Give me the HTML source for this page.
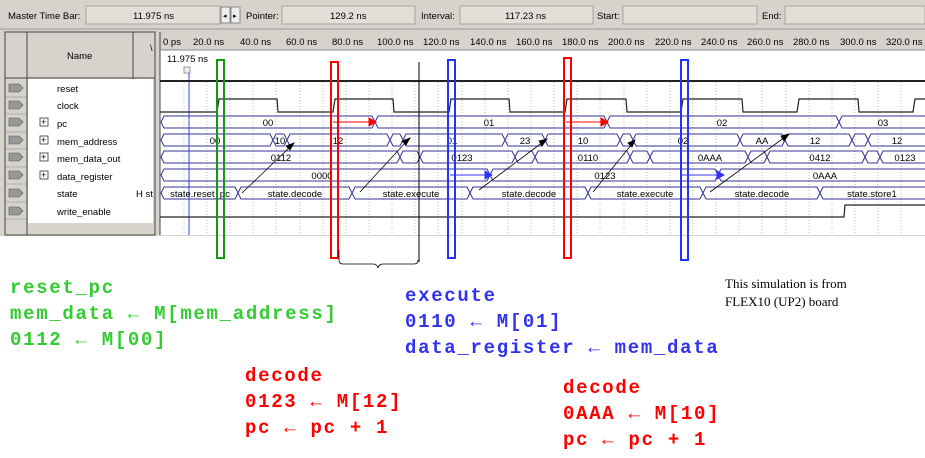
<!DOCTYPE html>
<html><head><meta charset="utf-8"><style>
body{margin:0;width:925px;height:458px;background:#fff;overflow:hidden;position:relative;font-family:"Liberation Sans",sans-serif}
.m{position:absolute;font-family:"Liberation Mono",monospace;font-weight:bold;font-size:19px;letter-spacing:1.7px;white-space:pre;line-height:26px}
</style></head><body>
<svg width="925" height="458" style="position:absolute;left:0;top:0" font-family="Liberation Sans, sans-serif">
<rect x="0" y="0" width="925" height="236" fill="#d6d3cc"/>
<!-- toolbar -->
<g font-size="9.5" fill="#000">
<text x="8" y="19">Master Time Bar:</text>
<rect x="86" y="6" width="134" height="18" fill="#e2dfd8" stroke="#a8a49c"/>
<text x="133" y="19">11.975 ns</text>
<rect x="221" y="7" width="9" height="16" fill="#eee" stroke="#888"/><rect x="231" y="7" width="9" height="16" fill="#eee" stroke="#888"/>
<text x="223" y="18" font-size="7">◂</text><text x="233" y="18" font-size="7">▸</text>
<text x="246" y="19">Pointer:</text>
<rect x="282" y="6" width="133" height="18" fill="#e2dfd8" stroke="#a8a49c"/>
<text x="330" y="19">129.2 ns</text>
<text x="421" y="19">Interval:</text>
<rect x="460" y="6" width="133" height="18" fill="#e2dfd8" stroke="#a8a49c"/>
<text x="505" y="19">117.23 ns</text>
<text x="597" y="19">Start:</text>
<rect x="623" y="6" width="134" height="18" fill="#e2dfd8" stroke="#a8a49c"/>
<text x="762" y="19">End:</text>
<rect x="785" y="6" width="140" height="18" fill="#e2dfd8" stroke="#a8a49c"/>
</g>
<line x1="0" y1="29" x2="925" y2="29" stroke="#999"/>
<!-- left panel -->
<rect x="5" y="32" width="150" height="203" fill="#d6d3cc" stroke="#444"/>
<rect x="28" y="79" width="105" height="144" fill="#fff"/>
<rect x="133" y="79" width="20" height="144" fill="#fff"/>
<line x1="27" y1="32" x2="27" y2="235" stroke="#444"/>
<line x1="133" y1="32" x2="133" y2="79" stroke="#444"/>
<line x1="5" y1="78" x2="155" y2="78" stroke="#444"/>
<text x="67" y="59" font-size="9.5">Name</text>
<text x="150" y="51" font-size="9">\</text>
<g font-size="9.5">
<text x="57" y="92">reset</text><text x="57" y="109">clock</text><text x="57" y="127">pc</text>
<text x="57" y="145">mem_address</text><text x="57" y="162">mem_data_out</text><text x="57" y="180">data_register</text>
<text x="57" y="197">state</text><text x="57" y="215">write_enable</text>
<text x="136" y="197">H st</text>
</g>
<g fill="#fff" stroke="#333" stroke-width="0.8">
<rect x="40" y="118" width="8" height="8"/><rect x="40" y="136" width="8" height="8"/><rect x="40" y="153" width="8" height="8"/><rect x="40" y="171" width="8" height="8"/>
</g>
<g font-size="9" fill="#000"><text x="41" y="125">+</text><text x="41" y="143">+</text><text x="41" y="160">+</text><text x="41" y="178">+</text></g>
<g fill="#999" stroke="#555" stroke-width="0.6">
<path d="M9 84h10l4 4-4 4H9z"/><path d="M9 101h10l4 4-4 4H9z"/><path d="M9 118h10l4 4-4 4H9z"/><path d="M9 136h10l4 4-4 4H9z"/><path d="M9 153h10l4 4-4 4H9z"/><path d="M9 171h10l4 4-4 4H9z"/><path d="M9 189h10l4 4-4 4H9z"/><path d="M9 207h10l4 4-4 4H9z"/>
</g>
<g stroke="#888" stroke-width="0.5"><line x1="5" y1="97" x2="27" y2="97"/><line x1="5" y1="114" x2="27" y2="114"/><line x1="5" y1="132" x2="27" y2="132"/><line x1="5" y1="149" x2="27" y2="149"/><line x1="5" y1="167" x2="27" y2="167"/><line x1="5" y1="184" x2="27" y2="184"/><line x1="5" y1="202" x2="27" y2="202"/><line x1="5" y1="219" x2="27" y2="219"/></g>
<!-- wave area -->
<rect x="160" y="32" width="765" height="203" fill="#fff"/>
<rect x="160" y="32" width="765" height="18" fill="#d6d3cc"/>
<line x1="160" y1="32" x2="160" y2="235" stroke="#444"/>
<line x1="160" y1="50" x2="925" y2="50" stroke="#888"/>
<g font-size="9.5">
<text x="163" y="45">0 ps</text><text x="193" y="45">20.0 ns</text><text x="240" y="45">40.0 ns</text><text x="286" y="45">60.0 ns</text><text x="332" y="45">80.0 ns</text><text x="377" y="45">100.0 ns</text><text x="423" y="45">120.0 ns</text><text x="470" y="45">140.0 ns</text><text x="516" y="45">160.0 ns</text><text x="562" y="45">180.0 ns</text><text x="608" y="45">200.0 ns</text><text x="655" y="45">220.0 ns</text><text x="701" y="45">240.0 ns</text><text x="747" y="45">260.0 ns</text><text x="793" y="45">280.0 ns</text><text x="840" y="45">300.0 ns</text><text x="886" y="45">320.0 ns</text>
<text x="167" y="62">11.975 ns</text>
</g>
<rect x="184" y="67" width="6" height="6" fill="#eee" stroke="#999"/>
<g stroke="#bbb" stroke-dasharray="1,2">
<line x1="184" y1="82" x2="184" y2="235"/><line x1="207" y1="82" x2="207" y2="235"/><line x1="230" y1="82" x2="230" y2="235"/><line x1="253" y1="82" x2="253" y2="235"/><line x1="276" y1="82" x2="276" y2="235"/><line x1="300" y1="82" x2="300" y2="235"/><line x1="323" y1="82" x2="323" y2="235"/><line x1="346" y1="82" x2="346" y2="235"/><line x1="369" y1="82" x2="369" y2="235"/><line x1="392" y1="82" x2="392" y2="235"/><line x1="415" y1="82" x2="415" y2="235"/><line x1="438" y1="82" x2="438" y2="235"/><line x1="462" y1="82" x2="462" y2="235"/><line x1="485" y1="82" x2="485" y2="235"/><line x1="508" y1="82" x2="508" y2="235"/><line x1="531" y1="82" x2="531" y2="235"/><line x1="554" y1="82" x2="554" y2="235"/><line x1="577" y1="82" x2="577" y2="235"/><line x1="600" y1="82" x2="600" y2="235"/><line x1="624" y1="82" x2="624" y2="235"/><line x1="647" y1="82" x2="647" y2="235"/><line x1="670" y1="82" x2="670" y2="235"/><line x1="693" y1="82" x2="693" y2="235"/><line x1="716" y1="82" x2="716" y2="235"/><line x1="739" y1="82" x2="739" y2="235"/><line x1="762" y1="82" x2="762" y2="235"/><line x1="786" y1="82" x2="786" y2="235"/><line x1="809" y1="82" x2="809" y2="235"/><line x1="832" y1="82" x2="832" y2="235"/><line x1="855" y1="82" x2="855" y2="235"/><line x1="878" y1="82" x2="878" y2="235"/><line x1="901" y1="82" x2="901" y2="235"/>
</g>
<line x1="189" y1="73" x2="189" y2="235" stroke="#3344ee"/>
<line x1="160" y1="81" x2="925" y2="81" stroke="#222" stroke-width="2"/>
<!-- clock -->
<polyline fill="none" stroke="#222" stroke-width="1.2" points="160,112 217,112 219,99 277,99 278,112 333,112 335,99 393,99 394,112 449,112 451,99 509,99 510,112 565,112 567,99 626,99 627,112 681,112 683,99 742,99 743,112 797,112 799,99 858,99 859,112 913,112 915,99 925,99"/>
<!-- write enable -->
<polyline fill="none" stroke="#222" stroke-width="1.2" points="160,217 844,217 845,205 925,205"/>
<!-- buses -->
<g fill="none" stroke="#333399" stroke-width="1">
<path d="M161 122l3-6h208l3 6-3 6H164zM375 122l3-6h226l3 6-3 6H378zM607 122l3-6h226l3 6-3 6H610zM839 122l3-6h83M839 122l3 6h83"/>
<path d="M161 140l3-6h106l3 6-3 6H164zM273 140l3-6h8l3 6-3 6h-8zM287 140l3-6h97l3 6-3 6h-97zM390 140l3-6h7l3 6-3 6h-7zM403 140l3-6h96l3 6-3 6h-96zM505 140l3-6h34l3 6-3 6h-34zM545 140l3-6h69l3 6-3 6h-69zM620 140l3-6h7l3 6-3 6h-7zM633 140l3-6h101l3 6-3 6H636zM740 140l3-6h39l3 6-3 6h-39zM785 140l3-6h61l3 6-3 6h-61zM852 140l3-6h10l3 6-3 6h-10zM868 140l3-6h54M868 140l3 6h54"/>
<path d="M161 157l3-6h233l3 6-3 6H164zM400 157l3-6h14l3 6-3 6h-14zM420 157l3-6h89l3 6-3 6h-89zM515 157l3-6h14l3 6-3 6h-14zM535 157l3-6h89l3 6-3 6h-89zM630 157l3-6h14l3 6-3 6h-14zM650 157l3-6h92l3 6-3 6h-92zM748 157l3-6h13l3 6-3 6h-13zM767 157l3-6h92l3 6-3 6h-92zM865 157l3-6h9l3 6-3 6h-9zM880 157l3-6h42M880 157l3 6h42"/>
<path d="M161 175l3-6h323l3 6-3 6H164zM490 175l3-6h222l3 6-3 6H493zM718 175l3-6h204M718 175l3 6h204"/>
<path d="M161 193l3-6h71l3 6-3 6h-71zM238 193l3-6h108l3 6-3 6H241zM352 193l3-6h112l3 6-3 6H355zM470 193l3-6h112l3 6-3 6H473zM588 193l3-6h109l3 6-3 6H591zM703 193l3-6h111l3 6-3 6H706zM820 193l3-6h102M820 193l3 6h102"/>
</g>
<g font-size="9.5" fill="#000" text-anchor="middle">
<text x="268" y="126">00</text><text x="489" y="126">01</text><text x="722" y="126">02</text><text x="883" y="126">03</text>
<text x="215" y="144">00</text><text x="280" y="144">10</text><text x="338" y="144">12</text><text x="452" y="144">01</text><text x="525" y="144">23</text><text x="583" y="144">10</text><text x="683" y="144">02</text><text x="762" y="144">AA</text><text x="815" y="144">12</text><text x="897" y="144">12</text>
<text x="281" y="161">0112</text><text x="462" y="161">0123</text><text x="588" y="161">0110</text><text x="710" y="161">0AAA</text><text x="820" y="161">0412</text><text x="905" y="161">0123</text>
<text x="322" y="179">0000</text><text x="605" y="179">0123</text><text x="825" y="179">0AAA</text>
<text x="200" y="197">state.reset_pc</text><text x="295" y="197">state.decode</text><text x="411" y="197">state.execute</text><text x="529" y="197">state.decode</text><text x="645" y="197">state.execute</text><text x="762" y="197">state.decode</text><text x="872" y="197">state.store1</text>
</g>
<!-- arrows -->
<g stroke="#ff0000" fill="#ff0000"><line x1="333" y1="122" x2="370" y2="122"/><path d="M376 122l-7-4v8z"/><line x1="566" y1="122" x2="602" y2="122"/><path d="M608 122l-7-4v8z"/></g>
<g stroke="#3333ff" fill="#3333ff"><line x1="450" y1="175" x2="485" y2="175"/><path d="M492 175l-7-4v8z"/><line x1="682" y1="175" x2="717" y2="175"/><path d="M724 175l-7-4v8z"/></g>
<g stroke="#000" fill="#000" stroke-width="0.8">
<line x1="242" y1="193" x2="290" y2="147"/><path d="M294 143l-8 3 4 4z"/>
<line x1="360" y1="192" x2="406" y2="142"/><path d="M410 138l-8 3 4 4z"/>
<line x1="479" y1="190" x2="543" y2="142"/><path d="M547 139l-8 2 3 5z"/>
<line x1="593" y1="192" x2="632" y2="144"/><path d="M635 140l-7 3 4 4z"/>
<line x1="710" y1="192" x2="785" y2="137"/><path d="M789 134l-8 2 3 5z"/>
</g>
<!-- markers -->
<g fill="none" stroke-width="2">
<rect x="217" y="60" width="7" height="198" stroke="#119911"/>
<rect x="331" y="62" width="7" height="196" stroke="#ff0000"/>
<rect x="448" y="60" width="7" height="198" stroke="#2233ff"/>
<rect x="564" y="58" width="7" height="200" stroke="#ff0000"/>
<rect x="681" y="60" width="7" height="200" stroke="#2233ff"/>
</g>
<line x1="419" y1="62" x2="419" y2="262" stroke="#000"/>
<path d="M339 250v10q0 4 4 4h30q4 0 5 4q1-4 5-4h31q4 0 4-4" fill="none" stroke="#000" stroke-width="0.8"/>
<text x="725" y="288" font-family="Liberation Serif, serif" font-size="13">This simulation is from</text>
<text x="725" y="306" font-family="Liberation Serif, serif" font-size="13">FLEX10 (UP2) board</text>
</svg>
<div class="m" style="left:10px;top:275px;color:#33cc33">reset_pc
mem_data ← M[mem_address]
0112 ← M[00]</div>
<div class="m" style="left:405px;top:283px;color:#3333ee">execute
0110 ← M[01]
data_register ← mem_data</div>
<div class="m" style="left:245px;top:363px;color:#ff0000">decode
0123 ← M[12]
pc ← pc + 1</div>
<div class="m" style="left:563px;top:375px;color:#ff0000">decode
0AAA ← M[10]
pc ← pc + 1</div>
</body></html>
